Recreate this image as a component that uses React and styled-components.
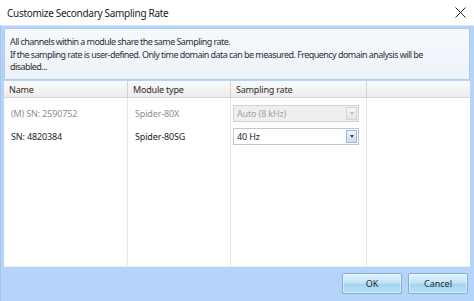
import React from "react";
import styled, { createGlobalStyle } from "styled-components";

const GlobalStyle = createGlobalStyle`
  html, body {
    margin: 0;
    padding: 0;
    background: #ffffff;
  }
  body {
    font-family: "Noto Sans", "Open Sans", sans-serif;
  }
`;

const Window = styled.div`
  width: 474px;
  height: 301px;
  display: flex;
  flex-direction: column;
  background: #ffffff;
  overflow: hidden;
`;

const TitleBar = styled.div`
  height: 25px;
  display: flex;
  align-items: center;
  justify-content: space-between;
  padding: 0 8px 0 7px;
  background: #ffffff;
  flex-shrink: 0;
`;

const Title = styled.div`
  font-size: 10px;
  color: #1b1b1b;
  letter-spacing: -0.3px;
`;

const Body = styled.div`
  flex: 1;
  display: flex;
  flex-direction: column;
  background: #b5d4fb;
  padding: 3px 4px 0 3px;
  border-left: 1px solid #a6c6ef;
  box-shadow: inset 0 1px 0 #d7e6f8;
  min-height: 0;
`;

const InfoBox = styled.div`
  height: 52px;
  box-sizing: border-box;
  border: 1px solid #b4cbe6;
  background: linear-gradient(#f6f9fd, #edf3fa);
  padding: 7px 5px 0 5px;
  font-size: 9px;
  line-height: 12.5px;
  color: #303030;
  letter-spacing: -0.55px;
  white-space: nowrap;
`;

const Grid = styled.div`
  height: 185px;
  margin-top: 1px;
  display: grid;
  grid-template-columns: 124px 103px 136px 1fr;
  grid-template-rows: 17px 1fr;
  background: #ffffff;
  border-bottom: 1px solid #f3f0e4;
`;

const HeaderCell = styled.div`
  display: flex;
  align-items: center;
  padding-left: 5px;
  font-size: 9px;
  letter-spacing: -0.2px;
  color: #2e2e2e;
  background: linear-gradient(#fafafa, #ececec);
  border-bottom: 1px solid #d6d6d6;
  border-right: ${(p) => (p.$last ? "none" : "1px solid #d3d3d3")};
`;

const Column = styled.div`
  display: flex;
  flex-direction: column;
  padding-top: 4px;
  border-right: ${(p) => (p.$last ? "none" : "1px solid #e6e6e6")};
`;

const Cell = styled.div`
  height: 23px;
  display: flex;
  align-items: center;
  padding-left: ${(p) => (p.$combo ? "2px" : "7px")};
  padding-right: ${(p) => (p.$combo ? "7px" : "0")};
  font-size: 9px;
  letter-spacing: -0.15px;
  color: ${(p) => (p.$dim ? "#8e8e8e" : "#1c1c1c")};
`;

const Combo = styled.div`
  flex: 1;
  height: 17px;
  box-sizing: border-box;
  display: flex;
  align-items: center;
  justify-content: space-between;
  padding: 0 1px 0 3px;
  border: 1px solid ${(p) => (p.$disabled ? "#d2d2d2" : "#bcc8d6")};
  background: ${(p) => (p.$disabled ? "#efefef" : "#ffffff")};
  color: ${(p) => (p.$disabled ? "#a3a3a3" : "#1a1a3a")};
  font-size: 9px;
  letter-spacing: -0.15px;
`;

const DropButton = styled.div`
  width: 11px;
  height: 13px;
  box-sizing: border-box;
  display: flex;
  align-items: center;
  justify-content: center;
  border: 1px solid ${(p) => (p.$disabled ? "#d4d4d4" : "#9fb8d3")};
  background: ${(p) =>
    p.$disabled
      ? "linear-gradient(#f6f6f6, #e6e6e6)"
      : "linear-gradient(#eef5fc, #c9dcef)"};
`;

const Arrow = styled.div`
  width: 0;
  height: 0;
  border-left: 2.5px solid transparent;
  border-right: 2.5px solid transparent;
  border-top: 3px solid ${(p) => (p.$disabled ? "#b8b8b8" : "#2c4a6e")};
`;

const Footer = styled.div`
  flex: 1;
  display: flex;
  justify-content: flex-end;
  align-items: flex-start;
  gap: 6px;
  padding: 6px 2px 0 0;
`;

const Button = styled.button`
  width: ${(p) => p.$w}px;
  height: 21px;
  padding: 0;
  border: 1px solid #7fb0cf;
  border-radius: 2px;
  background: linear-gradient(#e3f3fd 0%, #c3e4f7 45%, #a5d4ef 55%, #b9e0f5 100%);
  box-shadow: inset 0 0 0 1px rgba(255, 255, 255, 0.45);
  font-family: "Noto Sans", "Open Sans", sans-serif;
  font-size: 9px;
  color: #1e2a36;
`;

const CloseIcon = () => (
  <svg width="11" height="11" viewBox="0 0 11 11">
    <path d="M0.5 0.5 L10.5 10.5 M10.5 0.5 L0.5 10.5" stroke="#2a2a2a" strokeWidth="1" />
  </svg>
);

const ComboBox = ({ value, disabled }) => (
  <Combo $disabled={disabled}>
    <span>{value}</span>
    <DropButton $disabled={disabled}>
      <Arrow $disabled={disabled} />
    </DropButton>
  </Combo>
);

const modules = [
  { name: "(M) SN: 2590752", type: "Spider-80X", rate: "Auto (8 kHz)", master: true },
  { name: "SN: 4820384", type: "Spider-80SG", rate: "40 Hz", master: false },
];

const App = () => (
  <Window>
    <GlobalStyle />
    <TitleBar>
      <Title>Customize Secondary Sampling Rate</Title>
      <CloseIcon />
    </TitleBar>
    <Body>
      <InfoBox>
        All channels within a module share the same Sampling rate.
        <br />
        If the sampling rate is user-defined. Only time domain data can be measured. Frequency domain analysis will be
        <br />
        disabled...
      </InfoBox>
      <Grid>
        <HeaderCell>Name</HeaderCell>
        <HeaderCell>Module type</HeaderCell>
        <HeaderCell>Sampling rate</HeaderCell>
        <HeaderCell $last />
        <Column>
          {modules.map((m) => (
            <Cell key={m.name} $dim={m.master}>
              {m.name}
            </Cell>
          ))}
        </Column>
        <Column>
          {modules.map((m) => (
            <Cell key={m.type} $dim={m.master}>
              {m.type}
            </Cell>
          ))}
        </Column>
        <Column>
          {modules.map((m) => (
            <Cell key={m.rate} $combo>
              <ComboBox value={m.rate} disabled={m.master} />
            </Cell>
          ))}
        </Column>
        <Column $last />
      </Grid>
      <Footer>
        <Button $w={60}>OK</Button>
        <Button $w={60}>Cancel</Button>
      </Footer>
    </Body>
  </Window>
);

export default App;
